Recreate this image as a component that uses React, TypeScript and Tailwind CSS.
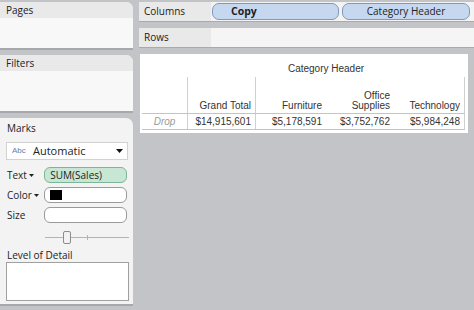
import { ReactNode } from 'react';

// Tableau-ish worksheet: shelves on the left, columns/rows shelves and a crosstab on the right.

function SidePanel({ title, className, children }: { title: string; className: string; children?: ReactNode }) {
  return (
    <div className={`flex flex-col overflow-hidden rounded-tr-[7px] border-b-2 border-[#a7a8ab] bg-[#f8f8f8] ${className}`}>
      <div className="h-[16px] bg-[#e9e9e9] pl-[6px] leading-[16px]">{title}</div>
      {children}
    </div>
  );
}

function Caret() {
  return (
    <svg width="5" height="3" viewBox="0 0 5 3" className="ml-[2px] inline-block">
      <path d="M0 0h5L2.5 3z" fill="#222" />
    </svg>
  );
}

function MarkRow({ label, caret, children }: { label: string; caret?: boolean; children?: ReactNode }) {
  return (
    <div className="flex h-[16px] items-center">
      <div className="flex w-[39px] items-center pl-[1px]">
        {label}
        {caret && <Caret />}
      </div>
      {children}
    </div>
  );
}

const cols = ['Grand Total', 'Furniture', 'Office Supplies', 'Technology'];
const vals = ['$14,915,601', '$5,178,591', '$3,752,762', '$5,984,248'];

export default function App() {
  return (
    <div className="flex h-[310px] w-[474px] bg-[#c3c4c8] font-['Open_Sans',sans-serif] text-[10px] text-[#222]">
      {/* ── Left: Pages / Filters / Marks ── */}
      <div className="flex w-[133px] flex-col pt-[2px]">
        <SidePanel title="Pages" className="h-[48px]" />
        <SidePanel title="Filters" className="mt-[5px] h-[58px]" />

        <div className="mt-[5px] flex h-[188px] flex-col rounded-tr-[7px] border-b-2 border-[#a7a8ab] bg-[#f3f3f3] px-[6px]">
          <div className="h-[24px] pl-[1px] leading-[20px]">Marks</div>
          <div className="flex h-[18px] w-[122px] items-center border border-[#d2d2d2] bg-white pl-[5px] pr-[4px]">
            <span className="w-[21px] font-['Liberation_Sans',sans-serif] text-[8px] text-[#5a7fae]">Abc</span>
            <span className="flex-1 text-[11px]">Automatic</span>
            <svg width="7" height="4" viewBox="0 0 7 4">
              <path d="M0 0h7L3.5 4z" fill="#111" />
            </svg>
          </div>
          <div className="mt-[7px] flex flex-col gap-[4px]">
            <MarkRow label="Text" caret>
              <div className="flex h-[16px] w-[84px] items-center rounded-[6px] border border-[#7fb597] bg-[#c7e6d4] pl-[5px]">
                SUM(Sales)
              </div>
            </MarkRow>
            <MarkRow label="Color" caret>
              <div className="flex h-[16px] w-[84px] items-center rounded-[6px] border border-[#9a9a9a] bg-white pl-[5px]">
                <div className="h-[10px] w-[12px] bg-black" />
              </div>
            </MarkRow>
            <MarkRow label="Size">
              <div className="h-[16px] w-[84px] rounded-[6px] border border-[#9a9a9a] bg-white" />
            </MarkRow>
          </div>
          {/* size slider */}
          <div className="relative ml-[39px] mt-[7px] h-[16px] w-[84px]">
            <div className="absolute left-0 right-0 top-[7px] h-px bg-[#b4b4b4]" />
            <div className="absolute left-[42px] top-[5px] h-[5px] w-px bg-[#b4b4b4]" />
            <div className="absolute left-[18px] top-[1px] h-[13px] w-[8px] rounded-[2px] border border-[#8c8c8c] bg-[#f2f2f2]" />
          </div>
          <div className="mt-[2px] h-[14px] pl-[1px] leading-[14px]">Level of Detail</div>
          <div className="h-[39px] w-[123px] border border-[#a0a0a0] bg-white" />
        </div>
      </div>

      {/* ── Right: shelves + view ── */}
      <div className="flex flex-1 flex-col pl-[6px] pt-[2px]">
        <div className="flex h-[20px] border-b border-[#a9aaad] bg-[#f3f3f3]">
          <div className="w-[72px] bg-[#e9e9e9] pl-[5px] leading-[19px]">Columns</div>
          <div className="flex items-center gap-[3px] pl-[1px]">
            <div className="h-[17px] w-[127px] rounded-[7px] border border-[#8098ba] bg-[#c6d8f0] pl-[18px] text-[10.5px] font-bold leading-[15px]">
              Copy
            </div>
            <div className="h-[17px] w-[128px] rounded-[7px] border border-[#8098ba] bg-[#c6d8f0] text-center leading-[15px]">
              Category Header
            </div>
          </div>
        </div>

        <div className="mt-[6px] flex h-[20px] border-b border-[#a9aaad] bg-[#f5f5f5]">
          <div className="w-[72px] bg-[#e9e9e9] pl-[5px] leading-[19px]">Rows</div>
        </div>

        <div className="ml-[1px] mt-[6px] h-[79px] w-[328px] bg-white pl-[2px] font-['Liberation_Sans',sans-serif] text-[10px] text-[#333]">
          <div className="ml-[45px] h-[23px] w-[278px] pt-[9px] text-center leading-[12px]">Category Header</div>
          <div className="grid h-[36px] grid-cols-[45px_69px_70px_68px_71px]">
            <div />
            {cols.map((c, i) => (
              <div
                key={c}
                className={`flex items-end justify-end pb-[2px] pr-[4px] text-right leading-[10px] ${
                  i === 0 ? 'border-x border-[#d0d0d0]' : ''
                } ${i === 3 ? 'border-r border-[#d0d0d0]' : ''}`}
              >
                {c === 'Office Supplies' ? (
                  <span>
                    Office
                    <br />
                    Supplies
                  </span>
                ) : (
                  c
                )}
              </div>
            ))}
          </div>
          <div className="grid h-[17px] w-[323px] grid-cols-[45px_69px_70px_68px_71px] border-y border-[#c4c4c4]">
            <div className="text-center italic leading-[15px] text-[#9a9a9a]">Drop</div>
            {vals.map((v, i) => (
              <div
                key={v}
                className={`pr-[4px] text-right leading-[15px] ${i === 0 ? 'border-x border-[#d0d0d0]' : ''} ${
                  i === 3 ? 'border-r border-[#d0d0d0]' : ''
                }`}
              >
                {v}
              </div>
            ))}
          </div>
        </div>
      </div>
    </div>
  );
}
